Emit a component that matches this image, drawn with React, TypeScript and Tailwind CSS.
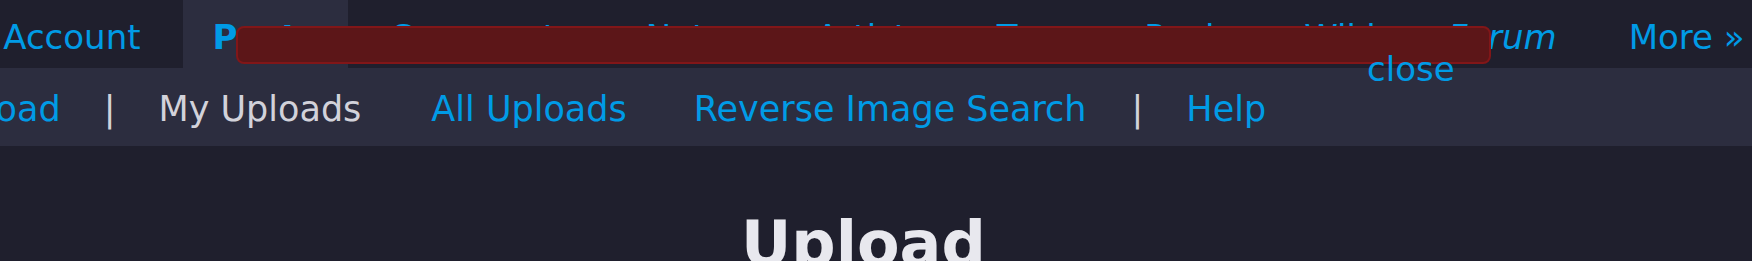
import React from "react";

const topItems = [
  { label: "My Account" },
  { label: "Posts", active: true },
  { label: "Comments" },
  { label: "Notes" },
  { label: "Artists" },
  { label: "Tags" },
  { label: "Pools" },
  { label: "Wiki" },
  { label: "Forum", italic: true },
  { label: "More »" },
];

export default function App() {
  return (
    <div className="relative w-[1752px] h-[261px] overflow-hidden bg-[#1f1f2d] font-['DejaVu_Sans',Verdana,sans-serif] text-[35px]">
      <nav className="h-[68px] bg-[#1f1f2d] text-[34px]">
        <ul className="flex ml-[-93px] h-full">
          {topItems.map((it) => (
            <li
              key={it.label}
              className={
                "h-[68px] px-[30px] mx-[6px] pt-[17px] leading-[40px] whitespace-nowrap " +
                (it.active ? "bg-[#2c2d3f] font-bold " : "") +
                (it.italic ? "italic " : "")
              }
            >
              <a className="text-[#009be6]">{it.label}</a>
            </li>
          ))}
        </ul>
      </nav>
      <div className="h-[78px] bg-[#2c2d3f]">
        <ul className="flex ml-[-97px] h-full pt-[21px] leading-[41px] whitespace-nowrap">
          <li className="px-[35px] text-[#009be6]">Upload</li>
          <li className="px-[8px] text-[#d2d2da]">|</li>
          <li className="px-[35px] text-[#d2d2da]">My Uploads</li>
          <li className="px-[35px] text-[#009be6]">All Uploads</li>
          <li className="pl-[32px] pr-[37px] text-[#009be6]">Reverse Image Search</li>
          <li className="px-[8px] text-[#d2d2da]">|</li>
          <li className="px-[35px] text-[#009be6]">Help</li>
        </ul>
      </div>
      <div className="pt-[67px] pl-[741px]">
        <h1 className="text-[62px] font-bold leading-[62px] text-[#e8e8ee]">Upload</h1>
      </div>
      <div className="absolute left-[236px] top-[26px] w-[1255px] h-[38px] rounded-[8px] border-2 border-[#811618] bg-[#5c1618]" />
      <a className="absolute left-[1367px] top-[49px] text-[34px] leading-[40px] text-[#009be6]">close</a>
    </div>
  );
}
